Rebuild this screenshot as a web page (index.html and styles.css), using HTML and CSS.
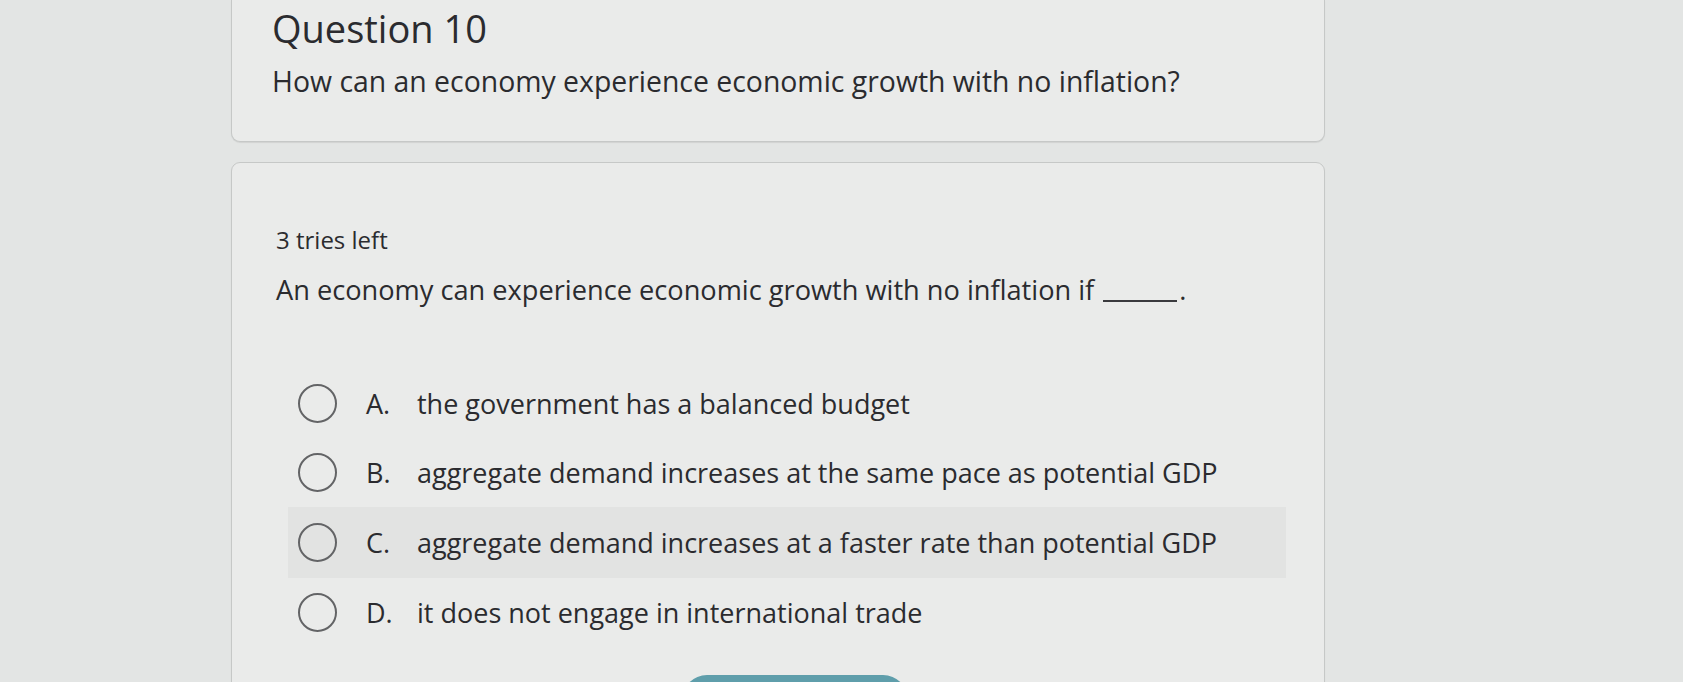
FILE: index.html
```html
<!DOCTYPE html>
<html lang="en">
<head>
<meta charset="utf-8">
<title>Question 10</title>
<link rel="stylesheet" href="styles.css">
</head>
<body>
<main class="page">
  <section class="card card-question">
    <h1 class="q-title">Question 10</h1>
    <p class="q-text">How can an economy experience economic growth with no inflation?</p>
  </section>
  <section class="card card-answer">
    <p class="tries">3 tries left</p>
    <p class="prompt">An economy can experience economic growth with no inflation if <span class="blank"></span>.</p>
    <ul class="options">
      <li class="option"><span class="radio"></span><span class="letter">A.</span><span class="opt-text">the government has a balanced budget</span></li>
      <li class="option"><span class="radio"></span><span class="letter">B.</span><span class="opt-text">aggregate demand increases at the same pace as potential GDP</span></li>
      <li class="option option-hover"><span class="radio"></span><span class="letter">C.</span><span class="opt-text">aggregate demand increases at a faster rate than potential GDP</span></li>
      <li class="option"><span class="radio"></span><span class="letter">D.</span><span class="opt-text">it does not engage in international trade</span></li>
    </ul>
    <div class="actions"><button class="submit" type="button"></button></div>
  </section>
</main>
</body>
</html>
```

FILE: styles.css
```css
html, body {
  margin: 0;
  padding: 0;
  background: #e3e5e4;
  height: 100%;
  overflow: hidden;
}
body {
  font-family: "Open Sans", "Noto Sans", sans-serif;
  color: #2b2b2f;
}
.page {
  padding-left: 231px;
  width: 1094px;
  display: flex;
  flex-direction: column;
  gap: 20px;
}
.card {
  background: #eaebea;
  border: 1px solid #c6c8c7;
  border-radius: 9px;
  box-shadow: 0 1px 1px rgba(0,0,0,0.08);
}
.card-question {
  border-top: none;
  border-radius: 0 0 9px 9px;
  height: 142px;
  box-sizing: border-box;
  padding: 2px 40px 0 40px;
}
.q-title {
  margin: 0;
  font-size: 38px;
  font-weight: 400;
  line-height: 52px;
}
.q-text {
  margin: 10px 0 0 0;
  font-size: 28.4px;
  line-height: 34px;
}
.card-answer {
  padding: 62px 40px 0 44px;
  height: 560px;
  box-sizing: border-box;
}
.tries {
  margin: 0;
  font-size: 24px;
  line-height: 30px;
}
.prompt {
  margin: 17px 0 0 0;
  font-size: 27.2px;
  line-height: 36px;
}
.blank {
  display: inline-block;
  width: 74px;
  border-bottom: 2px solid #3a3a3e;
  margin-left: 2px;
  margin-right: 2px;
  vertical-align: -2px;
}
.options {
  list-style: none;
  margin: 61px 0 0 12px;
  padding: 0;
  width: 998px;
  display: flex;
  flex-direction: column;
}
.option {
  display: flex;
  align-items: center;
  height: 69px;
  padding-left: 10px;
  font-size: 27px;
}
.option-hover {
  background: #e2e3e2;
  height: 71px;
}
.radio {
  width: 39px;
  height: 39px;
  border: 2.6px solid #636466;
  border-radius: 50%;
  box-sizing: border-box;
  flex: none;
}
.letter {
  margin-left: 29px;
  width: 51px;
}
.actions {
  display: flex;
  margin-top: 28px;
  padding-left: 406px;
}
.submit {
  width: 226px;
  height: 50px;
  border: none;
  border-radius: 25px;
  background: #5f9eab;
}
```
